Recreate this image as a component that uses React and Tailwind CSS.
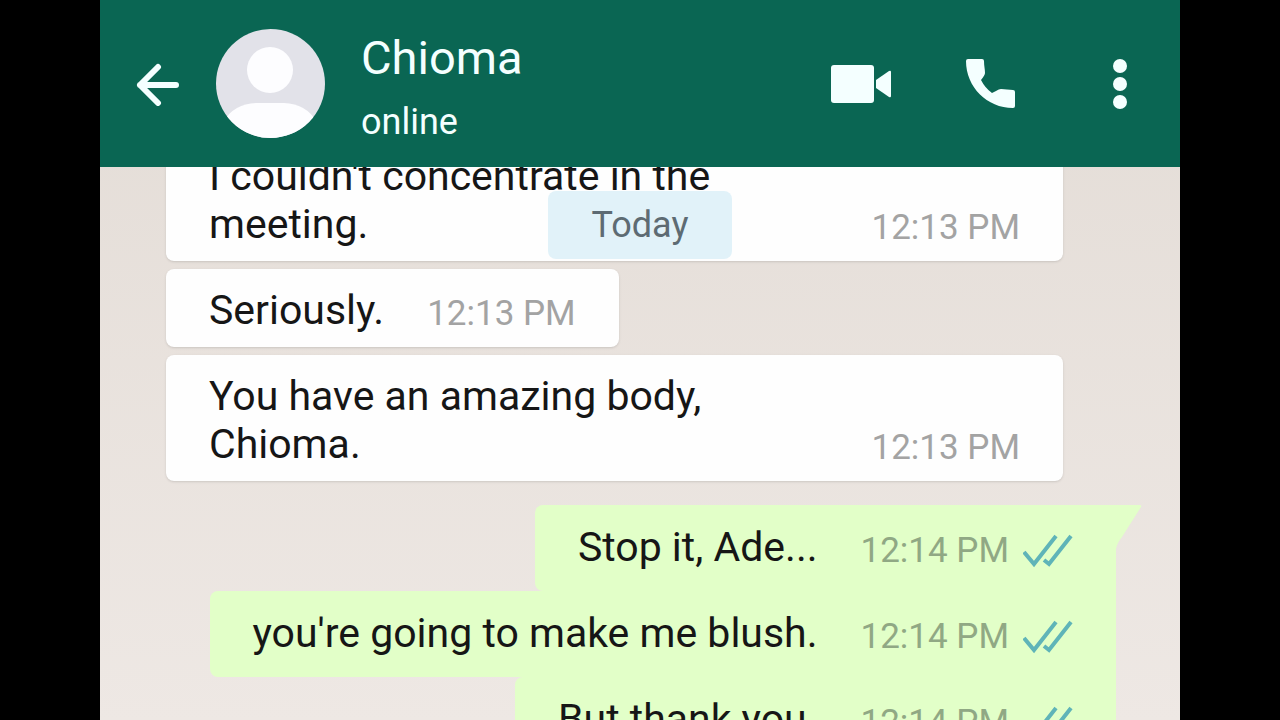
import React from "react";

const messages = [
  { id: 1, text: "I couldn't concentrate in the meeting.", time: "12:13 PM" },
  { id: 2, text: "Seriously.", time: "12:13 PM" },
  { id: 3, text: "You have an amazing body, Chioma.", time: "12:13 PM" },
  { id: 4, text: "Stop it, Ade...", time: "12:14 PM", mine: true, tail: true },
  { id: 5, text: "you're going to make me blush.", time: "12:14 PM", mine: true },
  { id: 6, text: "But thank you.", time: "12:14 PM", mine: true },
];

const BackIcon = () => (
  <svg width="44" height="44" viewBox="0 0 44 44" fill="none" stroke="currentColor" strokeWidth="6" strokeLinecap="round" strokeLinejoin="round">
    <path d="M40 23H4M22 5 4 23l18 18" />
  </svg>
);

const VideoIcon = () => (
  <svg width="60" height="38" viewBox="0 0 60 38" fill="currentColor">
    <rect width="43" height="38" rx="3" />
    <path d="M45 15 58 6q2-1 2 1v24q0 2-2 1L45 23z" />
  </svg>
);

const PhoneIcon = () => (
  <svg width="49" height="49" viewBox="0 0 49 49" fill="currentColor">
    <path d="M2 0h14q2 0 2 2c0 5 1 8 1 12q0 2-4 7q4 8 11 13l4-2q3-2 5-2l12 1q2 0 2 2v14q0 2-2 2C21 49 0 28 0 2q0-2 2-2z" />
  </svg>
);

const MoreIcon = () => (
  <svg width="14" height="50" viewBox="0 0 14 50" fill="currentColor">
    <circle cx="7" cy="7" r="7" />
    <circle cx="7" cy="25" r="7" />
    <circle cx="7" cy="43" r="7" />
  </svg>
);

const Avatar = () => (
  <svg width="109" height="109" viewBox="0 0 109 109" className="shrink-0 rounded-full bg-[#e2e2e9]">
    <circle cx="54" cy="41" r="23" fill="#fdfdff" />
    <path d="M8 109V92q10-17 32-18h28q22 1 32 18v17z" fill="#fdfdff" />
  </svg>
);

const Ticks = () => (
  <svg width="50" height="34" viewBox="0 0 50 34" fill="none" stroke="#5fb4b8" strokeWidth="4" className="ml-3.5">
    <path d="M1 18l10 12L33 2M21 26l5 4L48 2" />
  </svg>
);

const Bubble = ({ message }) => {
  const { text, time, mine, tail } = message;

  if (mine) {
    return (
      <li className="relative flex items-end self-end rounded-l-lg bg-[#e2ffc8] px-[43px] pt-[18px] pb-5">
        {tail && (
          <svg width="34" height="44" viewBox="0 0 34 44" fill="#e2ffc8" className="absolute top-0 -right-[26px]">
            <path d="M0 0h32q2 0 1 2L14 32q-5 6-6 12H0z" />
          </svg>
        )}
        <p>{text}</p>
        <time className="ml-[43px] text-[35px]/10 whitespace-nowrap text-[#90a884]">{time}</time>
        <span className="flex h-10 items-center">
          <Ticks />
        </span>
      </li>
    );
  }

  return (
    <li className="mr-[53px] mb-2 flex items-end justify-between self-start rounded-lg bg-[#fefefe] px-[43px] pt-[17px] pb-[13px] shadow-sm">
      <p>{text}</p>
      <time className="ml-[43px] text-[35px]/10 whitespace-nowrap text-[#a3a3a3]">{time}</time>
    </li>
  );
};

const App = () => {
  return (
    <div className="h-screen bg-black px-[100px] font-['Roboto',sans-serif]">
      <div className="flex h-full flex-col overflow-hidden bg-linear-to-b from-[#e3dcd6] to-[#eee8e4]">
        <header className="flex h-[167px] shrink-0 items-center bg-[#0a6653] pr-[53px] pl-9 text-[#f4ffff]">
          <button type="button" aria-label="Back">
            <BackIcon />
          </button>
          <div className="ml-9">
            <Avatar />
          </div>
          <div className="ml-9 flex-1 pt-3">
            <h1 className="text-[47px]/16">Chioma</h1>
            <p className="text-4xl/16">online</p>
          </div>
          <button type="button" aria-label="Video call">
            <VideoIcon />
          </button>
          <button type="button" aria-label="Voice call" className="ml-[75px]">
            <PhoneIcon />
          </button>
          <button type="button" aria-label="More options" className="ml-[98px]">
            <MoreIcon />
          </button>
        </header>

        <main className="relative min-h-0 flex-1 overflow-hidden">
          <div className="absolute inset-x-0 top-6 z-10 flex justify-center">
            <span className="rounded-lg bg-[#e1f2f9] px-11 py-3 text-4xl/11 text-[#5d6b73]">Today</span>
          </div>
          <ul className="-mt-8 flex flex-col pr-16 pl-[66px] text-[41px]/12 text-[#161616]">
            {messages.slice(0, 3).map((m) => (
              <Bubble key={m.id} message={m} />
            ))}
            <li aria-hidden="true" className="h-4" />
            {messages.slice(3).map((m) => (
              <Bubble key={m.id} message={m} />
            ))}
          </ul>
        </main>
      </div>
    </div>
  );
};

export default App;
